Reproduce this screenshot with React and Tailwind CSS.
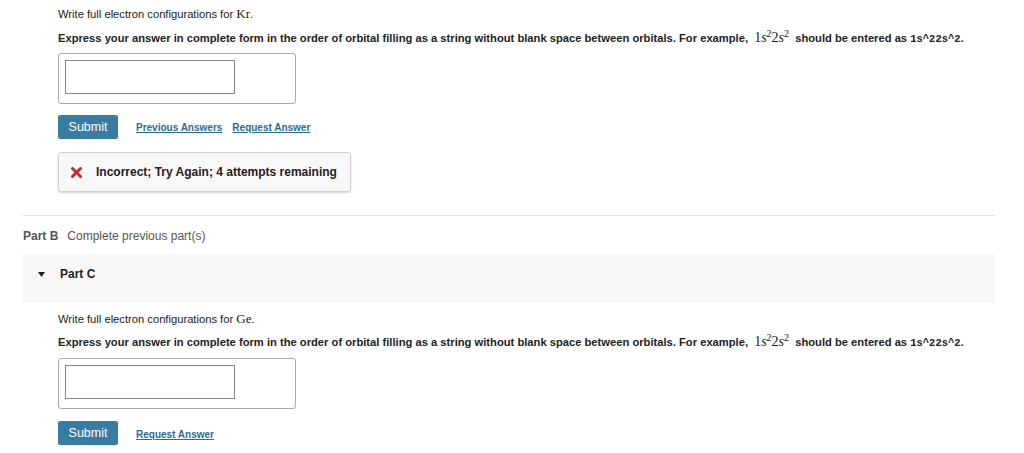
const SANS = { fontFamily: '"Liberation Sans", Arial, Helvetica, sans-serif' };

function MathConfig() {
  return (
    <span className="font-['Liberation_Serif',serif] text-[14px] font-normal ml-[3px] mr-[3px]">
      1<i>s</i>
      <sup className="text-[10px]">2</sup>2<i>s</i>
      <sup className="text-[10px]">2</sup>
    </span>
  );
}

function Instructions({ element, mt1, mt2 }) {
  return (
    <>
      <p className={`${mt1} h-4 leading-4 text-[11.2px] text-[#222]`}>
        Write full electron configurations for{' '}
        <span className="font-['Liberation_Serif',serif] text-[13px]">{element}</span>.
      </p>
      <p className={`${mt2} h-4 leading-4 text-[11.2px] font-bold text-[#222] whitespace-nowrap`}>
        Express your answer in complete form in the order of orbital filling as a string without blank
        space between orbitals. For example, <MathConfig /> should be entered as{' '}
        <span className="font-['Liberation_Mono',monospace] text-[10.5px]">1s^22s^2</span>.
      </p>
    </>
  );
}

function AnswerBox({ mt }) {
  return (
    <div className={`${mt} w-[238px] h-[51px] border border-[#aaa] rounded-[3px] flex items-start pl-[6px] pt-[6px]`}>
      <div className="w-[170px] h-[34px] border border-[#888] bg-white" />
    </div>
  );
}

function SubmitButton() {
  return (
    <button className="w-[60px] h-[24px] bg-[#387ca2] rounded-[2px] text-white text-[12.5px] leading-[24px]">
      Submit
    </button>
  );
}

function LinkText({ children }) {
  return (
    <span className="text-[10px] font-bold text-[#2d6c92] underline underline-offset-[1px]">{children}</span>
  );
}

function RedX() {
  return (
    <svg width="11" height="11" viewBox="0 0 11 11">
      <path d="M1.5 1.5 L9.5 9.5 M9.5 1.5 L1.5 9.5" stroke="#c8262c" strokeWidth="2.8" strokeLinecap="square" />
    </svg>
  );
}

export default function App() {
  return (
    <div style={SANS} className="w-[1024px] h-[453px] bg-white pl-[23px] pr-[29px] overflow-hidden">
      {/* Part A */}
      <div className="pl-[35px]">
        <Instructions element="Kr" mt1="mt-[6px]" mt2="mt-[8px]" />
        <AnswerBox mt="mt-[7px]" />
        <div className="mt-[11px] flex items-center">
          <SubmitButton />
          <div className="ml-[18px] flex items-center gap-[10px]">
            <LinkText>Previous Answers</LinkText>
            <LinkText>Request Answer</LinkText>
          </div>
        </div>
        <div className="mt-[13px] w-[293px] h-[40px] border border-[#cfcfcf] rounded-[3px] bg-[#f8f8f8] shadow-[0_1px_2px_rgba(0,0,0,0.18)] flex items-center pl-[12px]">
          <RedX />
          <span className="ml-[14px] text-[12px] font-bold text-[#222]">Incorrect; Try Again; 4 attempts remaining</span>
        </div>
      </div>

      <div className="mt-[23px] border-t border-[#e3e3e3]" />

      {/* Part B */}
      <p className="mt-[12px] h-4 leading-4 text-[12px] text-[#555]">
        <span className="font-bold">Part B</span>
        <span className="ml-[9px]">Complete previous part(s)</span>
      </p>

      {/* Part C */}
      <div className="mt-[10px] h-[49px] bg-[#f7f7f7] flex items-start pt-[12px] pl-[15px]">
        <div className="h-4 flex items-center">
          <svg width="7" height="5" viewBox="0 0 7 5">
            <path d="M0 0 L7 0 L3.5 5 Z" fill="#222" />
          </svg>
        </div>
        <span className="ml-[15px] h-4 leading-4 text-[12px] font-bold text-[#222]">Part C</span>
      </div>

      <div className="pl-[35px]">
        <Instructions element="Ge" mt1="mt-[8px]" mt2="mt-[7px]" />
        <AnswerBox mt="mt-[8px]" />
        <div className="mt-[12px] flex items-center">
          <SubmitButton />
          <div className="ml-[18px]">
            <LinkText>Request Answer</LinkText>
          </div>
        </div>
      </div>
    </div>
  );
}
